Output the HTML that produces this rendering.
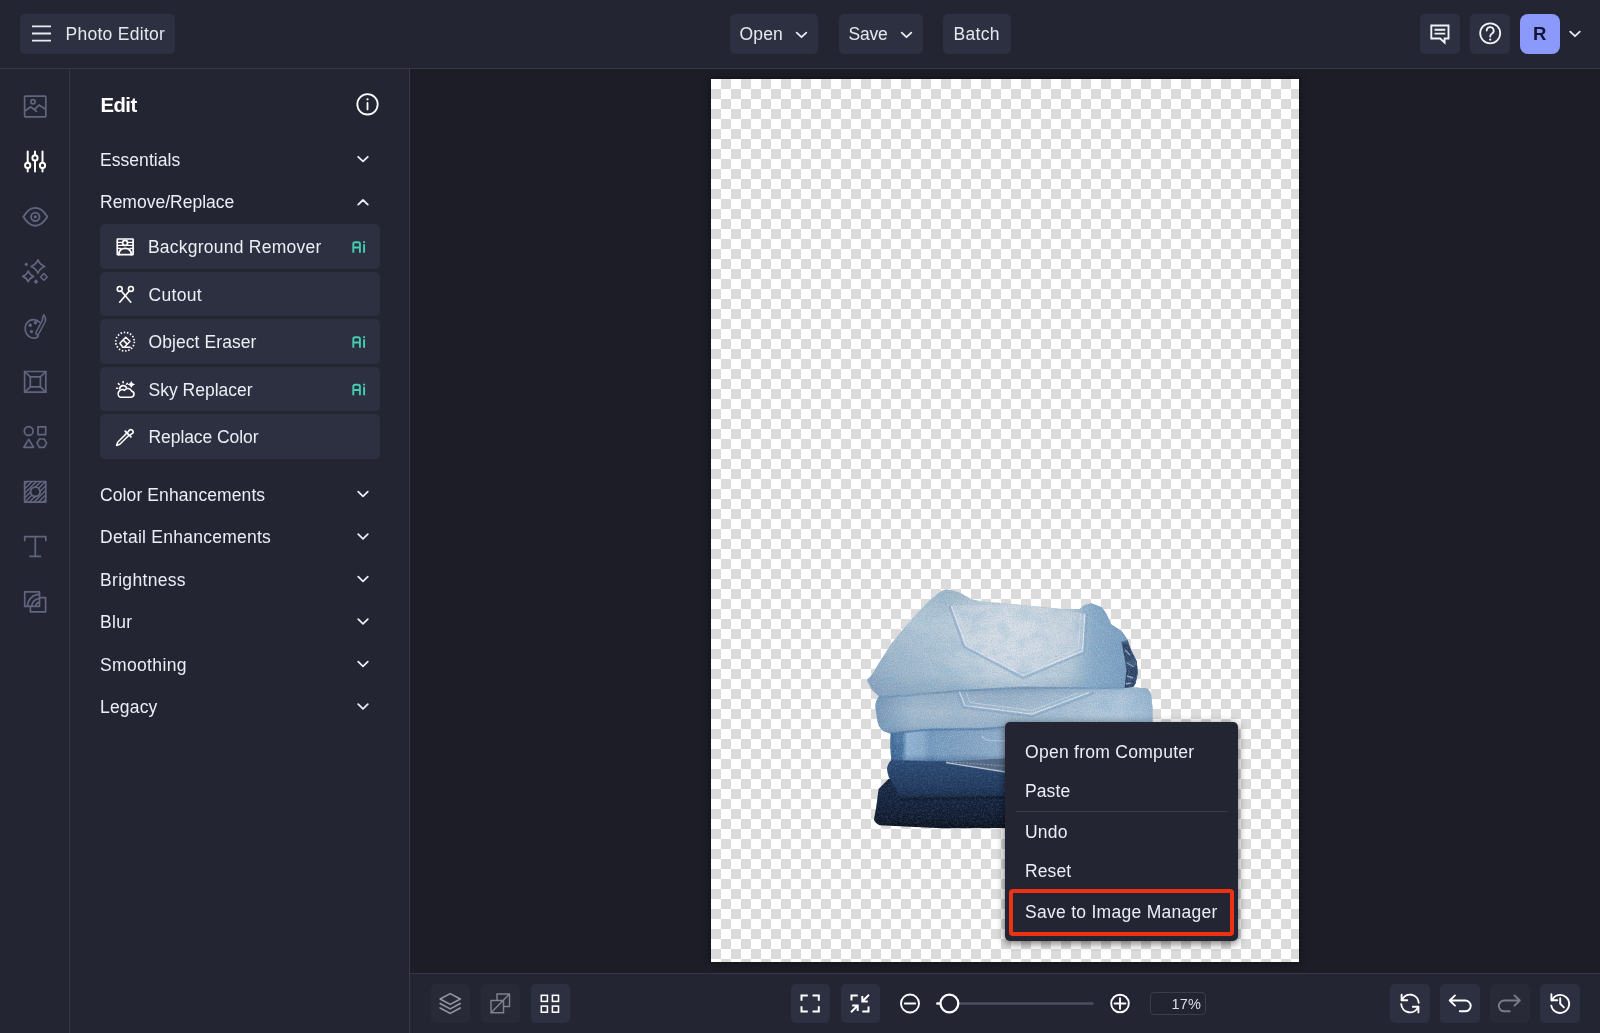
<!DOCTYPE html>
<html>
<head>
<meta charset="utf-8">
<title>Photo Editor</title>
<style>
*{box-sizing:border-box;margin:0;padding:0}
html,body{width:1600px;height:1033px;overflow:hidden;background:#1d1d28;font-family:"Liberation Sans",sans-serif;color:#eceef5}
.abs{position:absolute}
#top,#rail,#panel,#menu,#bottom{will-change:transform}
svg{position:absolute;overflow:visible}
#top{position:absolute;left:0;top:0;width:1600px;height:69px;background:#232533;border-bottom:1px solid #373949}
#rail{position:absolute;left:0;top:69px;width:70px;height:964px;background:#232533;border-right:1px solid #373949}
#panel{position:absolute;left:70px;top:69px;width:340px;height:964px;background:#232533;border-right:1px solid #373949}
#bottom{position:absolute;left:410px;top:973px;width:1190px;height:60px;background:#232533;border-top:1px solid #373949}
.btn{position:absolute;top:14px;height:39.5px;background:#2d3040;border-radius:5px;font-size:17.5px;line-height:39px;color:#e6e8f0;white-space:nowrap}
.btn span{position:absolute;top:.7px}
.sq{position:absolute;width:39.5px;height:39.5px;background:#2d3040;border-radius:5px}
.sq.dim{background:#282a38}
.sec{position:absolute;left:30px;font-size:17.5px;line-height:20px;color:#eceef5;white-space:nowrap}
.item{position:absolute;left:30px;width:280px;height:44.5px;background:#2d3040;border-radius:5px;font-size:17.5px;line-height:44.5px;color:#eceef5}
.item span.t{position:absolute;left:48.5px;top:1px;white-space:nowrap}
#canvas{position:absolute;left:710.9px;top:78.6px;width:588.5px;height:883.4px;background:#fff;box-shadow:0 0 7px rgba(0,0,0,.55);overflow:hidden}
#menu{position:absolute;left:1005px;top:721.5px;width:233px;height:218.8px;background:#232533;border-radius:5px;box-shadow:0 2px 9px rgba(0,0,0,.6);font-size:17.5px;color:#eceef5}
#menu div.mi{position:absolute;left:20px;line-height:20px;white-space:nowrap}
</style>
</head>
<body>
<div id="top">
  <div class="btn" style="left:20px;width:155px"><span style="left:45.5px;letter-spacing:.28px">Photo Editor</span>
    <svg style="left:0;top:0" width="60" height="40"><path d="M12 12.3H31M12 19.5H31M12 26.7H31" stroke="#e9ebf2" stroke-width="1.8" fill="none"/></svg>
  </div>
  <div class="btn" style="left:729.5px;width:88px"><span style="left:10px;letter-spacing:.15px">Open</span>
    <svg style="left:0;top:0" width="88" height="40"><path d="M66.7 18.6L71.5 23.2L76.3 18.6" stroke="#e9ebf2" stroke-width="1.8" fill="none" stroke-linecap="round" stroke-linejoin="round"/></svg>
  </div>
  <div class="btn" style="left:838.5px;width:84.5px"><span style="left:10px;letter-spacing:-.2px">Save</span>
    <svg style="left:0;top:0" width="85" height="40"><path d="M62.7 18.6L67.5 23.2L72.3 18.6" stroke="#e9ebf2" stroke-width="1.8" fill="none" stroke-linecap="round" stroke-linejoin="round"/></svg>
  </div>
  <div class="btn" style="left:943px;width:67.5px"><span style="left:10.5px;letter-spacing:.3px">Batch</span></div>
  <div class="sq" style="left:1420px;top:14px">
    <svg style="left:0;top:0" width="40" height="40"><path d="M11.3 11.5H28.5V24.5H24.6V28.6L20.2 24.5H11.3Z" stroke="#f2f3f8" stroke-width="1.9" fill="none" stroke-linejoin="miter"/><path d="M14.5 15.7H25.3M14.5 19.6H25.3" stroke="#f2f3f8" stroke-width="1.9" fill="none"/></svg>
  </div>
  <div class="sq" style="left:1470px;top:14px">
    <svg style="left:0;top:0" width="40" height="40"><circle cx="20.2" cy="19.3" r="10" stroke="#f2f3f8" stroke-width="1.8" fill="none"/><path d="M16.7 16.6A3.5 3.5 0 1 1 21.8 19.7Q20.2 20.6 20.2 22.6" stroke="#f2f3f8" stroke-width="1.8" fill="none" stroke-linecap="round"/><circle cx="20.2" cy="25.6" r="1.15" fill="#f2f3f8"/></svg>
  </div>
  <div class="sq" style="left:1520px;top:14px;background:#8b9afa;border-radius:8px;color:#141538;font-weight:bold;font-size:18.5px;line-height:40px;text-align:center;letter-spacing:0">R</div>
  <svg style="left:1560px;top:14px" width="30" height="40"><path d="M10.2 17.6L15 22.2L19.8 17.6" stroke="#e9ebf2" stroke-width="1.8" fill="none" stroke-linecap="round" stroke-linejoin="round"/></svg>
</div>
<div id="rail">
 <svg style="left:0;top:-69px" width="70" height="700" fill="none" stroke="#62657f" stroke-width="1.7" stroke-linejoin="round" stroke-linecap="round">
  <defs><clipPath id="txc"><rect x="24.6" y="481.500" width="21.200" height="20.600"/></clipPath></defs>
  <!-- image -->
  <rect x="24.6" y="96.2" width="21.2" height="20.6" rx="0.8"/>
  <circle cx="33" cy="101.7" r="2.1"/>
  <path d="M24.8 111L30.8 106.8L36.6 111.4M34.5 109.6L39 105L45.6 109.3"/>
  <!-- sliders (active) -->
  <g stroke="#ffffff" stroke-width="2">
   <path d="M27.7 151.4V162.3M27.7 168.5V171.6M35 151.4V154.8M35 161V171.6M42.5 151.4V162.3M42.5 168.5V171.6"/>
   <circle cx="27.7" cy="165.4" r="2.6"/><circle cx="35" cy="157.9" r="2.6"/><circle cx="42.5" cy="165.4" r="2.6"/>
  </g>
  <!-- eye -->
  <g stroke-width="1.9">
  <path d="M23.400 216.800C27 210.600 31 207.900 35.300 207.900C39.600 207.900 43.600 210.600 47.300 216.800C43.600 223 39.600 225.700 35.300 225.700C31 225.700 27 223 23.400 216.800Z"/>
  <circle cx="35.3" cy="216.8" r="4.2"/><circle cx="35.3" cy="216.8" r="1.6" fill="#62657f" stroke="none"/>
  </g>
  <!-- sparkles -->
  <path d="M37.900 259.900Q39.800 264.600 44.700 266.500Q39.800 268.400 37.900 273.100Q36 268.400 31.100 266.500Q36 264.600 37.900 259.900Z"/>
  <path d="M28.200 271Q29.700 274.900 33.600 276.400Q29.700 277.900 28.200 281.800Q26.700 277.900 22.800 276.400Q26.700 274.900 28.200 271Z"/>
  <path d="M43.9 273.500L47.200 276.900L43.900 280.300L40.600 276.900Z" stroke-width="1.500"/>
  <circle cx="26.3" cy="264.3" r="1.6" fill="#62657f" stroke="none"/>
  <path d="M36 279.300L38.400 281.700L36 284.100L33.600 281.700Z" fill="#62657f" stroke="none"/>
  <!-- palette -->
  <path d="M39.300 322.200A8.400 9.300 -8 1 0 37.400 337.200Q39 335.600 37.500 334.300"/>
  <path d="M43.900 314.800Q46.300 318.500 45.300 321.500L38.600 334Q37.300 335.200 36.200 334.200Q35.600 333 36.200 332L42.300 320.300Q42.200 317 43.900 314.800Z" stroke-width="1.500" fill="#232533"/>
  <g fill="#62657f" stroke="none"><circle cx="30.200" cy="325.300" r="1.7"/><circle cx="35.400" cy="322.700" r="1.7"/><circle cx="31.500" cy="331.600" r="1.7"/></g>
  <!-- frame -->
  <rect x="24.6" y="371.500" width="21.200" height="20.600"/>
  <rect x="30.300" y="376.800" width="10.100" height="10"/>
  <path d="M24.600 371.500L30.300 376.800M45.800 371.500L40.400 376.800M24.600 392.100L30.300 386.800M45.800 392.100L40.400 386.800"/>
  <!-- shapes -->
  <circle cx="28.700" cy="431" r="4.400"/>
  <rect x="38" y="426.800" width="7.700" height="7.800"/>
  <path d="M28.700 439.400L33.500 447.300H23.900Z"/>
  <path d="M37 443.100L39.400 439H44.200L46.600 443.100L44.200 447.300H39.400Z"/>
  <!-- texture -->
  <g clip-path="url(#txc)" stroke-width="1.500" stroke-linecap="butt">
   <path d="M20 489L32 477M20 493.500L36.500 477M20 498L41 477M20 502.500L45.500 477M22.500 504.500L50 477M27 504.500L50 481.500M31.500 504.500L50 486M36 504.500L50 490.500M40.500 504.500L50 495"/>
  </g>
  <circle cx="35.300" cy="491.800" r="4.700" fill="#232533" stroke-width="1.800"/>
  <rect x="24.600" y="481.500" width="21.200" height="20.600"/>
  <!-- T -->
  <path d="M24.700 540.500V536.700H45.800V540.500M35.300 536.700V556.400M30 556.400H40.500"/>
  <!-- overlay -->
  <rect x="24.700" y="591.800" width="14.800" height="14.600"/>
  <path d="M39.500 597.600H45.600V611.900H30.400V606.400"/>
  <path d="M27.500 606.400A12 12 0 0 1 39.500 594.400M31.700 606.400A7.800 7.800 0 0 1 39.500 598.600M35.600 606.400A3.900 3.900 0 0 1 39.500 602.500" stroke-width="1.800" stroke-linecap="butt"/>
 </svg>
</div>
<div id="panel">
  <div class="abs" style="left:30.5px;top:23.8px;font-size:20.3px;font-weight:bold;line-height:24px;color:#fff;letter-spacing:-.55px">Edit</div>
  <svg style="left:0;top:-69px" width="340" height="760" fill="none" stroke="#ffffff" stroke-width="1.8" stroke-linecap="round" stroke-linejoin="round">
    <!-- info -->
    <circle cx="297.500" cy="104.300" r="10.200"/>
    <path d="M297.500 103V109.400" /><circle cx="297.500" cy="99.300" r="1.150" fill="#fff" stroke="none"/>
    <!-- chevrons -->
    <g stroke="#eceef5">
    <path d="M288.200 156.800L293 161.400L297.800 156.800"/>
    <path d="M288.200 204.600L293 200L297.800 204.600"/>
    <path d="M288.200 491.700L293 496.300L297.800 491.700"/>
    <path d="M288.200 534.200L293 538.800L297.800 534.200"/>
    <path d="M288.200 576.700L293 581.300L297.800 576.700"/>
    <path d="M288.200 619.200L293 623.800L297.800 619.200"/>
    <path d="M288.200 661.700L293 666.300L297.800 661.700"/>
    <path d="M288.200 704.200L293 708.800L297.800 704.200"/>
    </g>
  </svg>
  <div class="sec" style="top:80.500px;letter-spacing:.05px">Essentials</div>
  <div class="sec" style="top:122.500px;letter-spacing:0">Remove/Replace</div>
  <div class="item" style="top:155px"><span class="t" style="letter-spacing:.24px;left:47.900px">Background Remover</span></div>
  <div class="item" style="top:202.500px"><span class="t" style="letter-spacing:.3px">Cutout</span></div>
  <div class="item" style="top:250px"><span class="t" style="letter-spacing:.08px">Object Eraser</span></div>
  <div class="item" style="top:297.500px"><span class="t" style="letter-spacing:0">Sky Replacer</span></div>
  <div class="item" style="top:345px"><span class="t" style="letter-spacing:-.07px">Replace Color</span></div>
  <svg style="left:0;top:-69px" width="340" height="760" fill="none" stroke="#ffffff" stroke-width="1.6" stroke-linecap="round" stroke-linejoin="round">
    <!-- Ai badges -->
    <g stroke="#45cdb1" stroke-width="1.9" stroke-linecap="butt" stroke-linejoin="round" id="ai1">
      <path d="M283.300 252.800V244.200Q283.300 242.300 285.200 242.300H288Q289.900 242.300 289.900 244.200V252.800M283.300 247.500H289.900"/>
      <path d="M294.100 244.300V252.800M294.100 241.200V243.100"/>
    </g>
    <g stroke="#45cdb1" stroke-width="1.9" stroke-linecap="butt" stroke-linejoin="round" transform="translate(0,95)">
      <path d="M283.300 252.800V244.200Q283.300 242.300 285.200 242.300H288Q289.900 242.300 289.900 244.200V252.800M283.300 247.500H289.900"/>
      <path d="M294.100 244.300V252.800M294.100 241.200V243.100"/>
    </g>
    <g stroke="#45cdb1" stroke-width="1.9" stroke-linecap="butt" stroke-linejoin="round" transform="translate(0,142.500)">
      <path d="M283.300 252.800V244.200Q283.300 242.300 285.200 242.300H288Q289.900 242.300 289.900 244.200V252.800M283.300 247.500H289.900"/>
      <path d="M294.100 244.300V252.800M294.100 241.200V243.100"/>
    </g>
    <!-- background remover icon -->
    <g stroke-width="1.7">
      <rect x="47.300" y="239" width="15.800" height="15.700" rx=".5"/>
      <path d="M47.300 242.300H51.600M58.600 242.300H63.100M47.300 245.300H52.600M57.600 245.300H63.100M47.300 248.300H50.500M59.800 248.300H63.100" stroke-width="1.3"/>
      <circle cx="55.100" cy="242.900" r="2.500"/>
      <path d="M48.900 254.700Q48.900 248.300 55.100 248.300Q61.300 248.300 61.300 254.700"/>
    </g>
    <!-- scissors -->
    <circle cx="49.700" cy="288.900" r="2.450"/><circle cx="60.900" cy="288.900" r="2.450"/>
    <path d="M51.100 290.800L60.800 302.200M59.500 290.800L49.700 302.200"/>
    <!-- object eraser -->
    <circle cx="55" cy="341.700" r="9.300" stroke-dasharray="1.500 1.750" stroke-linecap="butt" stroke-width="1.700"/>
    <path d="M49.900 343.300L55.700 337.200L60 341.200L54.300 347.300H52.800Z M53.100 340L57.200 344.100 M54.300 347.300H60.200" stroke-width="1.500"/>
    <!-- sky replacer -->
    <g stroke-width="1.600">
    <path d="M50 397.200H61.200A3.100 3.100 0 0 0 61.600 391.100A3.900 3.900 0 0 0 54.600 390.300A3.550 3.550 0 0 0 50 397.200Z"/>
    <path d="M49.700 388.900A3.600 3.600 0 0 1 56.300 387.200" stroke-width="1.700"/>
    <path d="M46.600 388.300H47.700M48.400 383.600L49.300 384.500M53.100 381.600V382.800M57.300 383.400L56.600 384.200" stroke-width="1.500"/>
    <path d="M61.300 380.900Q62 383.900 65 384.500Q62 385.100 61.300 388.100Q60.600 385.100 57.600 384.500Q60.600 383.900 61.300 380.900Z" fill="#fff" stroke="none"/>
    </g>
    <!-- eyedropper -->
    <path d="M56.500 433.400L47.700 442.200L46.500 445.500L49.800 444.300L58.700 435.500" stroke-width="1.500"/>
    <path d="M55.200 431.200L60.900 436.900" stroke-width="1.800"/>
    <path d="M57.700 432.400L59.200 430.300A2.300 2.300 0 0 1 62.800 433.100L60.200 434.900" stroke-width="1.600"/>
  </svg>
  <div class="sec" style="top:415.500px;letter-spacing:.1px">Color Enhancements</div>
  <div class="sec" style="top:458px;letter-spacing:.25px">Detail Enhancements</div>
  <div class="sec" style="top:500.500px;letter-spacing:.32px">Brightness</div>
  <div class="sec" style="top:543px;letter-spacing:.3px">Blur</div>
  <div class="sec" style="top:585.500px;letter-spacing:.35px">Smoothing</div>
  <div class="sec" style="top:628px;letter-spacing:.18px">Legacy</div>
</div>
<div id="canvas"><svg style="left:0;top:0" width="589" height="884"><defs><pattern id="ck" width="20" height="20" patternUnits="userSpaceOnUse"><rect x="10" y="0" width="10" height="10" fill="#dbdbdb"/><rect x="0" y="10" width="10" height="10" fill="#dbdbdb"/></pattern></defs><rect width="589" height="884" fill="url(#ck)"/></svg></div>
<svg id="jeans" style="left:0;top:0" width="1600" height="1033">
  <defs>
    <linearGradient id="g5" x1="0" y1="0" x2="0" y2="1"><stop offset="0" stop-color="#0c162a"/><stop offset=".12" stop-color="#12213d"/><stop offset=".5" stop-color="#0e1b33"/><stop offset=".8" stop-color="#0a1426"/><stop offset="1" stop-color="#050a14"/></linearGradient>
    <linearGradient id="g4" x1="0" y1="0" x2="0" y2="1"><stop offset="0" stop-color="#2f4f79"/><stop offset=".25" stop-color="#25426a"/><stop offset=".7" stop-color="#1c355a"/><stop offset=".9" stop-color="#152947"/><stop offset="1" stop-color="#0c172b"/></linearGradient>
    <linearGradient id="g3" gradientUnits="userSpaceOnUse" x1="890" y1="0" x2="1012" y2="0"><stop offset="0" stop-color="#36618f"/><stop offset=".1" stop-color="#416c9a"/><stop offset=".14" stop-color="#8fb1d2"/><stop offset=".27" stop-color="#86a9cb"/><stop offset=".33" stop-color="#6d94ba"/><stop offset=".6" stop-color="#7d9ebe"/><stop offset="1" stop-color="#93b0cc"/></linearGradient>
    <linearGradient id="g3v" x1="0" y1="0" x2="0" y2="1"><stop offset="0" stop-color="#264f7e" stop-opacity=".6"/><stop offset=".22" stop-color="#264f7e" stop-opacity="0"/><stop offset=".8" stop-color="#264f7e" stop-opacity="0"/><stop offset="1" stop-color="#264f7e" stop-opacity=".5"/></linearGradient>
    <linearGradient id="g2" x1="0" y1="0" x2="0" y2="1"><stop offset="0" stop-color="#7391ad"/><stop offset=".18" stop-color="#95aec5"/><stop offset=".55" stop-color="#a6bbcd"/><stop offset=".85" stop-color="#96b0c7"/><stop offset="1" stop-color="#6f8fae"/></linearGradient>
    <linearGradient id="g2l" gradientUnits="userSpaceOnUse" x1="874" y1="0" x2="912" y2="0"><stop offset="0" stop-color="#6389ad" stop-opacity=".8"/><stop offset="1" stop-color="#6389ad" stop-opacity="0"/></linearGradient>
    <linearGradient id="g2r" gradientUnits="userSpaceOnUse" x1="1010" y1="0" x2="1150" y2="0"><stop offset="0" stop-color="#b9d0e2" stop-opacity="0"/><stop offset=".8" stop-color="#b9d0e2" stop-opacity=".65"/><stop offset="1" stop-color="#93b3d0" stop-opacity=".7"/></linearGradient>
    <linearGradient id="g1" x1="0" y1="0" x2="0" y2="1"><stop offset="0" stop-color="#9db5c6"/><stop offset=".3" stop-color="#b7cad7"/><stop offset=".8" stop-color="#acc2d2"/><stop offset="1" stop-color="#86a4bc"/></linearGradient>
    <linearGradient id="g1r" gradientUnits="userSpaceOnUse" x1="1070" y1="0" x2="1138" y2="0"><stop offset="0" stop-color="#7aa0c2" stop-opacity="0"/><stop offset=".35" stop-color="#7aa0c2" stop-opacity=".78"/><stop offset="1" stop-color="#6890b5" stop-opacity=".95"/></linearGradient>
    <linearGradient id="g1l" gradientUnits="userSpaceOnUse" x1="868" y1="690" x2="935" y2="640"><stop offset="0" stop-color="#7f9cb7" stop-opacity=".9"/><stop offset=".5" stop-color="#8fa9c0" stop-opacity=".45"/><stop offset="1" stop-color="#8fa9c0" stop-opacity="0"/></linearGradient>
    <radialGradient id="g1h" gradientUnits="userSpaceOnUse" cx="1015" cy="640" r="75"><stop offset="0" stop-color="#e0e6ea" stop-opacity=".9"/><stop offset="1" stop-color="#e0e6ea" stop-opacity="0"/></radialGradient>
    <filter id="nzf" x="0" y="0" width="100%" height="100%"><feTurbulence type="fractalNoise" baseFrequency=".85" numOctaves="2" seed="3"/><feColorMatrix type="matrix" values="0 0 0 0 1  0 0 0 0 1  0 0 0 0 1  1.6 0 0 0 -.62"/><feComposite in2="SourceGraphic" operator="in"/></filter>
    <filter id="nzd" x="0" y="0" width="100%" height="100%"><feTurbulence type="fractalNoise" baseFrequency=".8" numOctaves="2" seed="11"/><feColorMatrix type="matrix" values="0 0 0 0 .1  0 0 0 0 .2  0 0 0 0 .4  1.6 0 0 0 -.62"/><feComposite in2="SourceGraphic" operator="in"/></filter>
    <filter id="nzc" x="0" y="0" width="100%" height="100%"><feTurbulence type="fractalNoise" baseFrequency=".06 .09" numOctaves="3" seed="7"/><feColorMatrix type="matrix" values="0 0 0 0 .22  0 0 0 0 .44  0 0 0 0 .62  2.2 0 0 0 -.95"/><feComposite in2="SourceGraphic" operator="in"/></filter>
    <clipPath id="cj"><path d="M946 589.300L953 590.500L960 592.800L971.500 599.200L982 601.500L1010 603.800L1033 606.100L1062 609L1079.700 609L1084.400 605L1091.300 603.200L1101.800 607.300L1106.400 613.700L1111.100 624.200L1121.500 631.100L1127.400 639.300L1130.800 649.700L1136.700 661.300L1137.800 673L1135.500 683.400L1133.200 687L1147 688.600Q1151 691 1151.500 698L1152.500 708V730H1012V828L941.300 828.300L879.800 825.300Q874.500 823 874 819.300L876.300 806.500L878.600 789L888.500 779L887.300 767Q888.500 762.500 891.400 760Q889.500 747 890.800 732L883.200 731.100Q878.500 727 877.400 720.700L875.700 709Q874.500 702 879.200 696.500L871.600 689.300L867 680L871.600 675.300L881.500 659L892 642.700L903.500 628.800L915.500 614.900L928 602L940.500 591.600Z"/></clipPath>
    <filter id="nzm" x="0" y="0" width="100%" height="100%"><feTurbulence type="fractalNoise" baseFrequency=".35 .5" numOctaves="2" seed="5"/><feColorMatrix type="matrix" values="0 0 0 0 .4  0 0 0 0 .55  0 0 0 0 .75  1.8 0 0 0 -.75"/><feComposite in2="SourceGraphic" operator="in"/></filter>
    <path id="j5" d="M888.500 779L912 780V797L1012 795V828L941.300 828.300L879.800 825.300Q874.500 823 874 819.300L876.300 806.500L878.600 789Z"/>
    <path id="j4" d="M891.400 759L946 759.500L1012 754V797L929.700 798.500L899.500 799.500L897.200 790.200L889 777.400Q886.500 771 887.300 767Q888.500 762.500 891.400 760Z"/>
    <path id="j3" d="M890.800 730.500L929.700 727L982 726.500L1012 724V758L946 761.300L929.700 761.300L891.400 760.200Q889.500 747 890.800 732Z"/>
    <path id="j2" d="M879.200 696L906.500 694.500L956.400 690L1020 686.500L1124 687.500L1135.500 687.500L1147 688.600Q1151 691 1151.500 698L1152.500 708V730H1012L982 728.800L929.700 729.400L890.200 733.500L883.200 731.100Q878.500 727 877.400 720.700L875.700 709Q874.500 702 879.200 696Z"/>
    <path id="j1" d="M946 589.300L953 590.500L960 592.800L971.500 599.200L982 601.500L1010 603.800L1033 606.100L1062 609L1079.700 609L1084.400 605L1091.300 603.200L1101.800 607.300L1106.400 613.700L1111.100 624.200L1121.500 631.100L1127.400 639.300L1130.800 649.700L1136.700 661.300L1137.800 673L1135.500 683.400L1133.200 687L1124 688L1020 687L956.400 690.500L906.500 695.100L879.200 696.500L871.600 689.300L867 680L871.600 675.300L881.500 659L892 642.700L903.500 628.800L915.500 614.900L928 602L940.500 591.600Z"/>
    <clipPath id="cjl"><path d="M946 589.300L953 590.500L960 592.800L971.500 599.200L982 601.500L1010 603.800L1033 606.100L1062 609L1079.700 609L1084.400 605L1091.300 603.200L1101.800 607.300L1106.400 613.700L1111.100 624.200L1121.500 631.100L1127.400 639.300L1130.800 649.700L1136.700 661.300L1137.800 673L1135.500 683.400L1133.200 687L1147 688.600Q1151 691 1151.500 698L1152.500 708V730H1012V758L946 761.300L929.700 761.300L891.400 760.200Q889.500 747 890.800 732L883.200 731.100Q878.500 727 877.400 720.700L875.700 709Q874.500 702 879.200 696.500L871.600 689.300L867 680L871.600 675.300L881.500 659L892 642.700L903.500 628.800L915.500 614.900L928 602L940.500 591.600Z"/></clipPath>
    <clipPath id="cjd"><path d="M891.400 760L946 761L1012 756V828L941.300 828.300L879.800 825.300Q874.500 823 874 819.300L876.300 806.500L878.600 789L888.500 779L887.300 767Q888.500 762.500 891.400 760Z"/></clipPath>
  </defs>
  <!-- 5 navy -->
  <use href="#j5" fill="url(#g5)"/>
  <!-- 4 mid dark -->
  <use href="#j4" fill="url(#g4)"/>
  <path d="M946 761.300L1012 756.500V773Z" fill="#50657f"/>
  <path d="M946 762.500L1012 773" stroke="#b9c4d2" stroke-width="1.300" fill="none"/>
  <path d="M952 762L1012 766.500" stroke="#8d9cb0" stroke-width="1" fill="none" stroke-dasharray="2 1.500"/>
  <path d="M899.500 799.800L929.700 798.800L1012 797.300" stroke="#0a1324" stroke-width="2.600" fill="none" opacity=".85"/>
  <!-- 3 medium -->
  <use href="#j3" fill="url(#g3)"/>
  <use href="#j3" fill="url(#g3v)"/>
  <path d="M1012 741L990 740.500Q984 740 982 736" stroke="#c4d6e8" stroke-width="1.200" fill="none" opacity=".8"/>
  <!-- 2 light -->
  <use href="#j2" fill="url(#g2)"/>
  <use href="#j2" fill="url(#g2l)"/>
  <use href="#j2" fill="url(#g2r)"/>
  <!-- 1 top -->
  <use href="#j1" fill="url(#g1)"/>
  <use href="#j1" fill="url(#g1h)"/>
  <use href="#j1" fill="url(#g1l)"/>
  <use href="#j1" fill="url(#g1r)"/>
  <!-- pocket fills -->
  <path d="M950 606.100L964.600 646.200L1023 677L1083.200 652L1085.500 613.700L1062 609.500L1010 604.500Z" fill="#d9dfe5" opacity=".4"/>
  <!-- frayed dark edge -->
  <path d="M1121.500 642L1127.500 640L1131 650L1136.700 661.300L1137.800 673L1135.500 683.400L1133.200 687L1124.500 688L1126.500 670L1124 655Z" fill="#253c5f"/>
  <path d="M1125 650L1130 655M1127 663L1134 667M1127 676L1133 678M1126 684L1131 683" stroke="#b8cadb" stroke-width="1.400" fill="none" opacity=".7"/>
  <!-- junction shadows -->
  <path d="M879.200 697L906.500 695.600L956.400 691L1020 687.600L1124 688.600" stroke="#5f86ad" stroke-width="2" fill="none" opacity=".6"/>
  <path d="M890.200 733.500L929.700 729.600L982 729L1012 726.500" stroke="#3f6a9c" stroke-width="2" fill="none" opacity=".6"/>
  <path d="M891.400 760.600L929.700 761.600L946 761.600" stroke="#27426c" stroke-width="1.800" fill="none" opacity=".7"/>
  <!-- pockets stitching -->
  <g fill="none" stroke-linejoin="round">
    <path d="M949.500 606L964 647L1023 678L1084.500 652.500L1087 613.500" stroke="#86a5c4" stroke-width="2.400" opacity=".65"/>
    <path d="M951.500 606.500L966 645.500L1023 675.300L1082.500 651L1084.800 613.700" stroke="#e3ebf2" stroke-width="1.100"/>
    <path d="M956 609L969.500 643.500L1023 671.300L1078.500 648.500L1080.500 614" stroke="#dfe8f0" stroke-width=".8" opacity=".85"/>
    <path d="M957 691.500L962.500 707.500L1032 716.500L1094 693" stroke="#7f9fc0" stroke-width="2.200" opacity=".65"/>
    <path d="M959.500 691.500L964.800 705.500L1032 714L1089 692.500" stroke="#dce7f0" stroke-width="1.100"/>
    <path d="M966 692L970 702.500L1032 710.500L1078 693" stroke="#d6e2ec" stroke-width=".8" opacity=".8"/>
  </g>
  <!-- denim noise -->
  <g clip-path="url(#cjl)">
    <rect x="860" y="585" width="300" height="180" fill="#fff" filter="url(#nzc)" opacity=".34"/>
    <rect x="860" y="585" width="300" height="180" fill="#fff" filter="url(#nzf)" opacity=".34"/>
    <rect x="860" y="585" width="300" height="180" fill="#fff" filter="url(#nzd)" opacity=".3"/>
  </g>
  <g clip-path="url(#cjd)">
    <rect x="860" y="750" width="160" height="85" fill="#fff" filter="url(#nzm)" opacity=".16"/>
    <rect x="860" y="750" width="160" height="85" fill="#fff" filter="url(#nzf)" opacity=".1"/>
    <rect x="860" y="750" width="160" height="85" fill="#fff" filter="url(#nzd)" opacity=".3"/>
  </g>
</svg>
<div id="menu">
  <div class="mi" style="top:19.800px;letter-spacing:.28px">Open from Computer</div>
  <div class="mi" style="top:58.800px;letter-spacing:.1px">Paste</div>
  <div class="abs" style="left:11px;top:89px;width:211.500px;height:1px;background:#3a3c4d"></div>
  <div class="mi" style="top:99.700px;letter-spacing:.2px">Undo</div>
  <div class="mi" style="top:139.400px;letter-spacing:.1px">Reset</div>
  <div class="mi" style="top:179.800px;letter-spacing:.28px">Save to Image Manager</div>
  <div class="abs" style="left:3.700px;top:167.200px;width:225.700px;height:47.300px;border:4.800px solid #ee3314;border-radius:4px"></div>
</div>
<div id="bottom">
  <div class="sq dim" style="left:20.500px;top:9.500px"></div>
  <div class="sq dim" style="left:70.500px;top:9.500px"></div>
  <div class="sq" style="left:120.500px;top:9.500px"></div>
  <div class="sq" style="left:380.500px;top:9.500px"></div>
  <div class="sq" style="left:430.500px;top:9.500px"></div>
  <div class="sq" style="left:980.300px;top:9.500px"></div>
  <div class="sq" style="left:1030px;top:9.500px"></div>
  <div class="sq dim" style="left:1080px;top:9.500px"></div>
  <div class="sq" style="left:1130.300px;top:9.500px"></div>
  <div class="abs" style="left:740px;top:18.400px;width:55.500px;height:22.200px;border:1px solid #3b3d4e;border-radius:4px;background:#222431"></div>
  <div class="abs" style="left:761.500px;top:21px;font-size:14.500px;line-height:18px;color:#dcdee8;letter-spacing:.2px">17%</div>
  <svg style="left:-410px;top:-974px" width="1600" height="1033" fill="none" stroke="#ffffff" stroke-width="1.800" stroke-linecap="round" stroke-linejoin="round">
    <!-- layers -->
    <g stroke="#9697a3" stroke-width="1.600">
      <path d="M450.200 993.600L460.300 999L450.200 1004.400L440.100 999Z"/>
      <path d="M440.100 1003.500L450.200 1008.900L460.300 1003.500M440.100 1008L450.200 1013.400L460.300 1008"/>
    </g>
    <!-- overlap squares -->
    <g stroke="#80818c" stroke-width="1.450" stroke-linejoin="miter" stroke-linecap="butt">
      <path d="M497 1000.500V994H509.500V1006.500H503.500M491 1000.500H503.500V1012.800H491Z M491 1012.800L509.500 994"/>
    </g>
    <!-- grid -->
    <g stroke-width="1.550" stroke-linejoin="miter">
      <rect x="541.300" y="995.300" width="6.100" height="6.100"/><rect x="552.400" y="995.300" width="6.100" height="6.100"/>
      <rect x="541.300" y="1006.100" width="6.100" height="6.100"/><rect x="552.400" y="1006.100" width="6.100" height="6.100"/>
    </g>
    <!-- fullscreen -->
    <g stroke-width="2" stroke-linecap="butt" stroke-linejoin="miter">
      <path d="M801.500 1000.800V995.400H807.800M812.500 995.400H818.800V1000.800M818.800 1006.200V1011.600H812.500M807.800 1011.600H801.500V1006.200"/>
      <!-- fit -->
      <path d="M851.500 1000.400V995.400H857.800M868.500 1006.600V1011.600H862.300"/>
      <path d="M869 994.800L862.300 1001.500M862.300 996V1001.500H867.800M851 1012.200L857.700 1005.500M857.700 1011V1005.500H852.200"/>
    </g>
    <!-- minus -->
    <circle cx="910" cy="1003.500" r="9" stroke-width="1.900"/><path d="M904.800 1003.500H915.200" stroke-width="1.900"/>
    <!-- slider -->
    <path d="M959 1003.500H1093.500" stroke="#4b4d63" stroke-width="2.400" stroke-linecap="butt"/>
    <path d="M936.300 1003.500H940" stroke-width="2.400" stroke-linecap="butt"/>
    <circle cx="949.400" cy="1003.500" r="8.900" stroke-width="2.300"/>
    <!-- plus -->
    <circle cx="1120" cy="1003.500" r="8.800" stroke-width="1.900"/><path d="M1114.600 1003.500H1125.400M1120 998.100V1008.900" stroke-width="1.900"/>
    <!-- sync -->
    <g stroke-width="1.900">
      <path d="M1401.840 1000.200A8.800 8.800 0 0 1 1418.770 1002.730M1418.160 1006.800A8.800 8.800 0 0 1 1401.230 1004.270"/>
      <path d="M1401.600 994.600V1000.200H1407.200M1418.400 1012.400V1006.800H1412.800"/>
    </g>
    <!-- undo -->
    <g stroke-width="1.900">
      <path d="M1455 995.400L1449.700 1000.500L1455 1005.600M1450 1000.500H1465.300A5.400 5.400 0 0 1 1465.300 1011.300H1459.800"/>
    </g>
    <!-- redo -->
    <g stroke="#7b7c88" stroke-width="1.900">
      <path d="M1514.500 995.400L1519.800 1000.500L1514.500 1005.600M1519.500 1000.500H1504.200A5.400 5.400 0 0 0 1504.200 1011.300H1509.700"/>
    </g>
    <!-- history -->
    <g stroke-width="1.900">
      <path d="M1551.900 1000.300A9 9 0 1 1 1551.300 1005.600"/>
      <path d="M1551.400 994.300V1000.200H1557.300"/>
      <path d="M1560.200 998.300V1003.800L1563.900 1007.400"/>
    </g>
  </svg>
</div>
</body>
</html>
